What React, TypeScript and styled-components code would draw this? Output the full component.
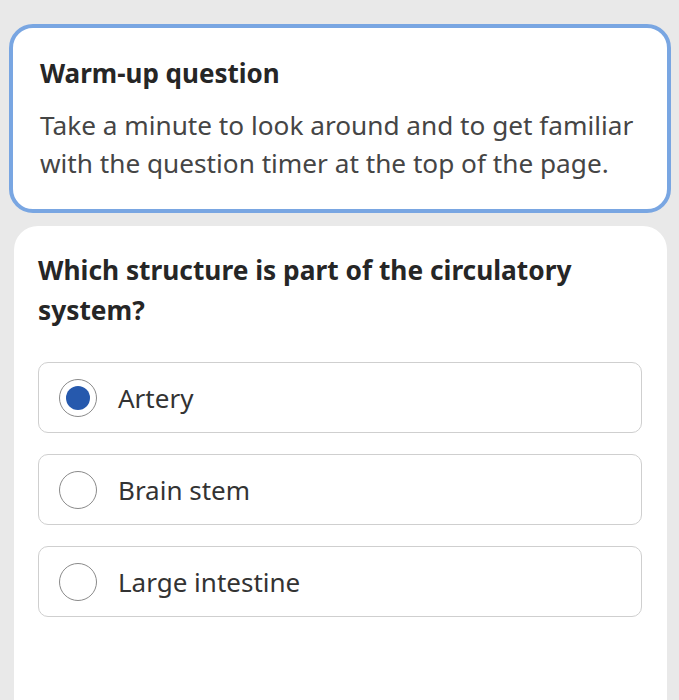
import React, { useState } from "react";
import styled, { createGlobalStyle } from "styled-components";

const GlobalStyle = createGlobalStyle`
  html, body {
    margin: 0;
    padding: 0;
    background: #e9e9e9;
    font-family: "Noto Sans", "Open Sans", sans-serif;
  }
`;

const Page = styled.div`
  width: 679px;
  height: 700px;
  overflow: hidden;
  box-sizing: border-box;
  padding: 24px 8px 0 9px;
  display: flex;
  flex-direction: column;
  gap: 13px;
`;

const IntroCard = styled.section`
  background: #fff;
  border: 4px solid #79a6e2;
  border-radius: 24px;
  padding: 28px 12px 27px 27px;
  box-sizing: border-box;
`;

const IntroTitle = styled.h2`
  margin: 0 0 16px;
  font-size: 26px;
  font-weight: 700;
  line-height: 34px;
  color: #262626;
`;

const IntroText = styled.p`
  margin: 0;
  font-size: 26.2px;
  line-height: 38px;
  color: #454545;
`;

const QuestionCard = styled.section`
  flex: 1;
  margin: 0 4px 0 5px;
  background: #fff;
  border-radius: 24px 24px 0 0;
  padding: 24px 25px 0 24px;
`;

const Question = styled.h3`
  margin: 0 0 32px;
  font-size: 26.3px;
  font-weight: 700;
  line-height: 40px;
  color: #262626;
`;

const Options = styled.div`
  display: flex;
  flex-direction: column;
  gap: 21px;
`;

const Option = styled.label`
  display: flex;
  align-items: center;
  gap: 21px;
  height: 71px;
  box-sizing: border-box;
  padding: 0 20px;
  border: 1.5px solid #cfcfcf;
  border-radius: 10px;
  cursor: pointer;
`;

const Radio = styled.span<{ $checked: boolean }>`
  width: 38px;
  height: 38px;
  box-sizing: border-box;
  border-radius: 50%;
  border: 1.5px solid #8a8a8a;
  display: flex;
  align-items: center;
  justify-content: center;
  flex-shrink: 0;

  &::after {
    content: "";
    width: 24px;
    height: 24px;
    border-radius: 50%;
    background: #2659ad;
    display: ${(p) => (p.$checked ? "block" : "none")};
  }
`;

const OptionText = styled.span`
  font-size: 26px;
  color: #333;
`;

const choices = ["Artery", "Brain stem", "Large intestine"];

export default function App() {
  const [selected, setSelected] = useState(0);
  return (
    <>
      <GlobalStyle />
      <Page>
        <IntroCard>
          <IntroTitle>Warm-up question</IntroTitle>
          <IntroText>
            Take a minute to look around and to get familiar with the question
            timer at the top of the page.
          </IntroText>
        </IntroCard>
        <QuestionCard>
          <Question>Which structure is part of the circulatory system?</Question>
          <Options>
            {choices.map((c, i) => (
              <Option key={c} onClick={() => setSelected(i)}>
                <Radio $checked={selected === i} />
                <OptionText>{c}</OptionText>
              </Option>
            ))}
          </Options>
        </QuestionCard>
      </Page>
    </>
  );
}
